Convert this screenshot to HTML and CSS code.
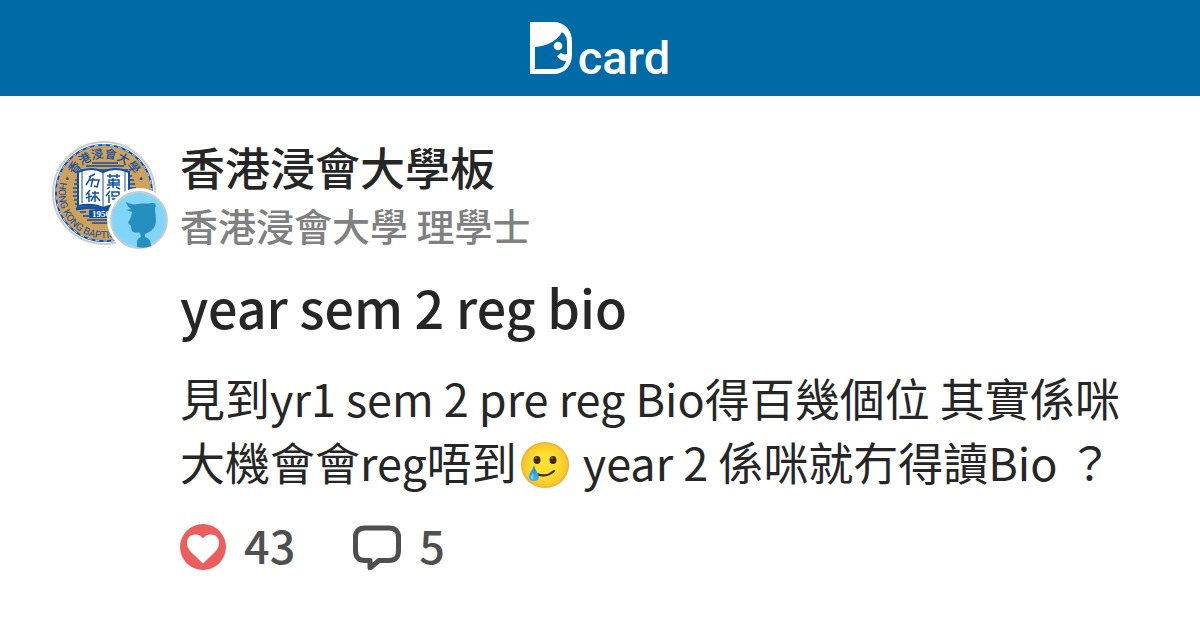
FILE: index.html
```html
<!DOCTYPE html>
<html lang="zh-Hant">
<head>
    <meta charset="UTF-8">
    <meta name="viewport" content="width=device-width, initial-scale=1.0">
    <title>year sem 2 reg bio | Dcard</title>
    <link rel="stylesheet" href="styles.css">
</head>
<body>

    <header class="header">
        <svg class="logo-mark" viewBox="0 0 42 52" aria-hidden="true">
            <path fill="#fff" fill-rule="evenodd" d="M0 0H23C35 0 42 8 42 20V32C42 44 35 52 23 52H0ZM5 25C17 24 27 19 32 10C36 13 37 16 37 20V32C34 33 33 32 31 31L27 34C29 37 32 39 36 39C35 44 31 47 25 47H5Z"/>
            <circle cx="28" cy="24" r="4.3" fill="#fff"/>
        </svg>
        <span class="logo-text">card</span>
    </header>

    <main class="post">
        <div class="avatar">
            <svg class="seal" viewBox="0 0 104 104" aria-hidden="true">
                <defs>
                    <path id="ring-top" d="M17 52A35 35 0 0 1 87 52"/>
                    <path id="ring-bottom" d="M8 41A45 45 0 0 0 96 63"/>
                </defs>
                <circle cx="52" cy="52" r="51" fill="#fff" stroke="#ccc" stroke-width="2"/>
                <circle cx="52" cy="52" r="47" fill="#cfa25c"/>
                <circle cx="52" cy="52" r="48" fill="none" stroke="#1250a4" stroke-width="2"/>
                <circle cx="52" cy="52" r="48" fill="none" stroke="#dbe4ef" stroke-width="1" stroke-dasharray="4 4"/>
                <g stroke="#1250a4" stroke-width="1.5">
                    <path d="M40 22H66M34 25H72M28 29H76M25 35H80M23 39H82M22 43H83M21 47H84M21 51H84M21 55H84M22 59H83M23 63H82M25 67H80M28 71H34M31 75H76M35 79H70M40 82H64"/>
                </g>
                <path d="M26 31Q40 25 51 31Q63 25 77 31V65Q63 62 51 67Q40 62 26 65Z" fill="#fff" stroke="#1250a4" stroke-width="2"/>
                <path d="M30 62V29M51 31V67M73 29V62" stroke="#1250a4" fill="none"/>
                <path d="M24 68Q40 64 51 70Q63 64 78 68" stroke="#1250a4" stroke-width="3" fill="none"/>
                <g fill="none" stroke="#1250a4" stroke-width="1.5">
                    <path d="M37 36L43 33M39 35L36 41L34 44M37 39H47L45 46L42 45M41 37L39 46M38 49L34 54M37 52V61M34 57L40 55M43 50V61M40 52H47M42 55L39 60M44 55L48 60"/>
                    <path d="M55 35H68M58 33V37M65 33V37M57 39H67V42H57ZM55 44H68M61 37V47M58 46L55 48M64 46L68 48M58 50L54 55M57 54V62M60 51H67V55H60ZM60 58H68L61 62M61 57L67 62"/>
                </g>
                <rect x="37" y="69" width="30" height="8" fill="#1250a4"/>
                <text class="seal-year" x="40" y="76">1956</text>
                <text class="seal-name"><textPath href="#ring-top" startOffset="50%">・香港浸會大學・</textPath></text>
                <text class="seal-english"><textPath href="#ring-bottom">HONG KONG BAPTIST</textPath></text>
            </svg>
            <svg class="persona" viewBox="0 0 64 64" aria-hidden="true">
                <circle cx="32" cy="32" r="32" fill="#fff"/>
                <circle cx="32" cy="32" r="28" fill="#81d4fa" stroke="#ccc" stroke-width="2"/>
                <path fill="#258fc0" d="M19 14C23 16 27 17 31 16C36 15 41 16 45 15C48 15 50 17 48 20C48 24 49 27 49 33C49 38 46 43 38 46V49C42 50 44 53 44 58Q37 61 30 59V54C30 51 32 50 34 49L33 45C31 44 29 45 26 44C24 42 24 40 24 38L21 35L24 29L25 24L19 22L24 21C21 19 20 17 19 14Z"/>
            </svg>
        </div>

        <article class="content">
            <div class="board">香港浸會大學板</div>
            <div class="school">香港浸會大學 理學士</div>
            <h1 class="title">year sem 2 reg bio</h1>
            <p class="excerpt">見到yr1 sem 2 pre reg Bio得百幾個位 其實係咪大機會會reg唔到<svg class="emoji" viewBox="0 0 48 48" role="img" aria-label="🥲">
                <defs>
                    <radialGradient id="face">
                        <stop offset="0.5" stop-color="#fde030"/>
                        <stop offset="0.9" stop-color="#f9c72b"/>
                        <stop offset="1" stop-color="#f1a72c"/>
                    </radialGradient>
                    <linearGradient id="tear" x2="0" y2="1">
                        <stop offset="0" stop-color="#1689d8"/>
                        <stop offset="1" stop-color="#40b9fa"/>
                    </linearGradient>
                </defs>
                <ellipse cx="24" cy="24" rx="24" ry="23" fill="url(#face)"/>
                <ellipse cx="16" cy="19" rx="3.5" ry="4" fill="#422b0d"/>
                <ellipse cx="32" cy="19" rx="3.5" ry="4" fill="#422b0d"/>
                <circle cx="15" cy="17" r="1" fill="#896024"/>
                <circle cx="31" cy="17" r="1" fill="#896024"/>
                <path d="M16 33Q25 37 33 30" fill="none" stroke="#422b0d" stroke-width="2.2" stroke-linecap="round"/>
                <path d="M13 24C14 29 18 33 18 36C18 39 16 40 13 40C10 40 8 39 8 36C8 32 12 29 13 24Z" fill="url(#tear)"/>
                <path d="M10 36Q11 32 12 33Q13 35 12 38Q10 39 10 36Z" fill="#81d4fa"/>
            </svg> year 2 係咪就冇得讀Bio ？</p>

            <div class="stats">
                <div class="stat">
                    <svg class="heart" viewBox="0 0 46 46" aria-hidden="true">
                        <circle cx="23" cy="23" r="23" fill="#ec5d5e"/>
                        <path fill="#fff" d="M23 39.5L12 29C8 25 7 22 7 19C7 14 10 10.5 15 10.5C19 10.5 21 12 23 14.5C25 12 27 10.5 31 10.5C36 10.5 39 14 39 19C39 22 38 25 34 29Z"/>
                    </svg>
                    <span>43</span>
                </div>
                <div class="stat">
                    <svg class="bubble" viewBox="0 0 48 46" aria-hidden="true">
                        <path d="M12 4H36C43 4 45.5 8 45.500 13V26C45.500 33 43 36.500 36 36.500H26L17 44V36.500H12C5 36.500 2.500 33 2.500 26V13C2.500 8 5 4 12 4Z" fill="none" stroke="#4f4f4f" stroke-width="5" stroke-linejoin="round"/>
                    </svg>
                    <span>5</span>
                </div>
            </div>
        </article>
    </main>

</body>
</html>
```
FILE: styles.css
```css
body {
    margin: 0;
    background-color: #fff;
    color: #262626;
    font-family: "Noto Sans CJK TC", sans-serif;
}

.header {
    display: flex;
    justify-content: center;
    align-items: center;
    gap: 6px;
    height: 96px;
    background-color: #006aa6;
}

.logo-mark {
    width: 42px;
    height: 52px;
}

.logo-text {
    color: #fff;
    font-family: Roboto, sans-serif;
    font-size: 47px;
    font-weight: 500;
    line-height: 48px;
    padding-top: 20px;
}

.post {
    display: flex;
    gap: 24px;
    padding: 41px 60px 40px 52px;
}

.avatar {
    position: relative;
    flex: none;
    width: 104px;
    height: 104px;
    margin-top: 4px;
}

.seal {
    display: block;
    width: 104px;
    height: 104px;
}

.seal text {
    fill: #1250a4;
    font-weight: 500;
}

.seal .seal-name {
    font-size: 12px;
    text-anchor: middle;
}

.seal .seal-english {
    font-family: Roboto, sans-serif;
    font-size: 10px;
    font-weight: 400;
}

.seal .seal-year {
    fill: #fff;
    font-family: "Liberation Serif", serif;
    font-size: 9px;
    font-weight: 700;
}

/* sits on the corner of the seal */
.persona {
    position: absolute;
    right: -15px;
    bottom: -7px;
    width: 64px;
    height: 64px;
}

.content {
    flex: 1;
}

.board {
    font-size: 45px;
    font-weight: 500;
    line-height: 60px;
}

.school {
    color: #808080;
    font-size: 38px;
    font-weight: 500;
    line-height: 56px;
}

.title {
    margin: 18px 0 23px;
    font-size: 52px;
    font-weight: 500;
    line-height: 72px;
}

.excerpt {
    margin: 0;
    font-size: 45px;
    line-height: 64px;
}

.emoji {
    width: 48px;
    height: 48px;
    margin: 0 4px;
    vertical-align: -8px;
}

.stats {
    display: flex;
    gap: 58px;
    margin-top: 26px;
    color: #4f4f4f;
    font-size: 45px;
    font-weight: 500;
    line-height: 50px;
}

.stat {
    display: flex;
    align-items: flex-end;
    gap: 18px;
}

.heart {
    width: 46px;
    height: 46px;
}

.bubble {
    width: 48px;
    height: 46px;
}
```
